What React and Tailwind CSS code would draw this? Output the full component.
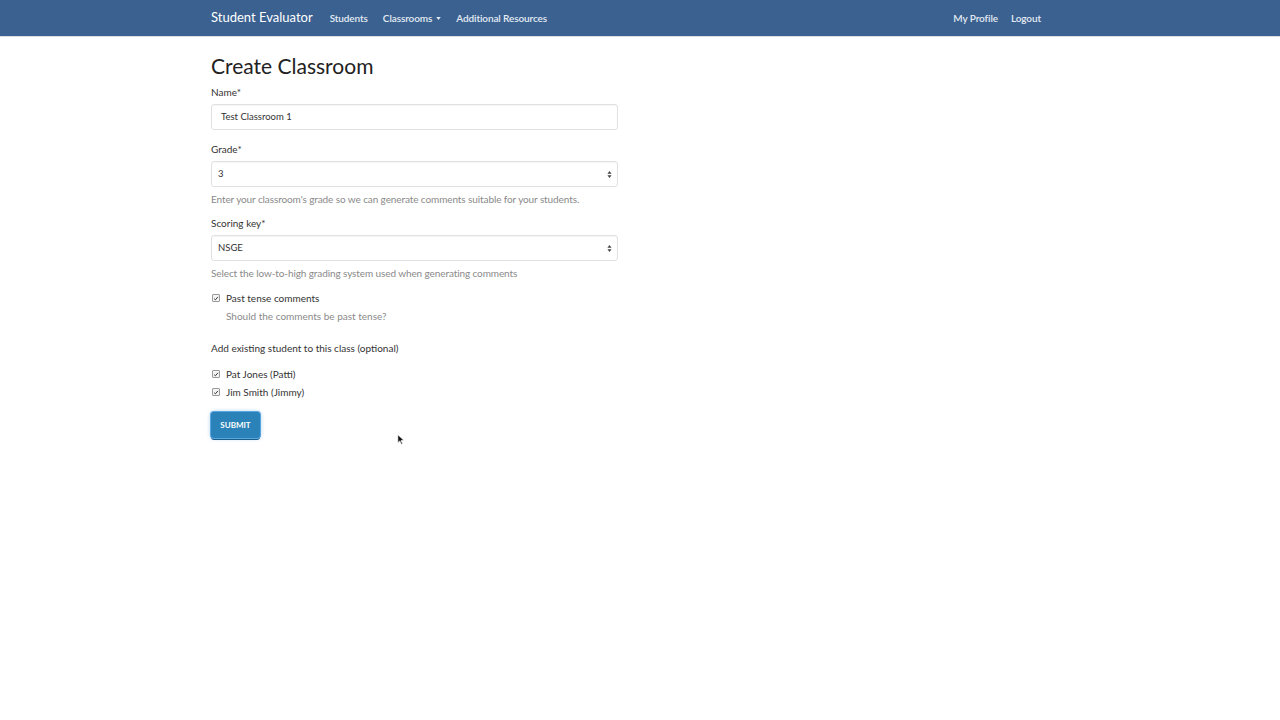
// Create Classroom form — bootstrap-ish flat theme, hand-rolled in Tailwind.

const font = { fontFamily: 'Lato, "Noto Sans", sans-serif' };

function Check() {
  return (
    <span className="inline-flex h-[8px] w-[8px] items-center justify-center rounded-[1px] border border-[#9a9a9a] bg-[#f4f4f4]">
      <svg viewBox="0 0 8 8" className="h-[7px] w-[7px]">
        <path d="M1.5 4.2 L3.2 5.8 L6.6 1.8" fill="none" stroke="#333" strokeWidth="1.3" />
      </svg>
    </span>
  );
}

function SelectArrows() {
  return (
    <svg viewBox="0 0 6 10" className="h-[9px] w-[5px]">
      <path d="M0.5 4 L3 0.8 L5.5 4 Z" fill="#444" />
      <path d="M0.5 6 L3 9.2 L5.5 6 Z" fill="#444" />
    </svg>
  );
}

function Field({ label, children, help }) {
  return (
    <div>
      <div className="h-[14px] text-[10px] leading-[14px] text-[#333]">{label}</div>
      {children}
      {help && (
        <p className="mt-[6px] h-[12px] text-[10px] leading-[12px] tracking-[-0.1px] text-[#8a8a8a]">{help}</p>
      )}
    </div>
  );
}

function Select({ value }) {
  return (
    <div className="mt-[5px] flex h-[26px] items-center justify-between rounded-[3px] border border-[#e1e1e1] bg-white pl-[6px] pr-[5px] text-[9.5px] text-[#333] shadow-[inset_0_1px_1px_rgba(0,0,0,0.04)]">
      <span>{value}</span>
      <SelectArrows />
    </div>
  );
}

function CheckRow({ children }) {
  return (
    <label className="flex h-[18px] items-center gap-[6px] pl-[1px] text-[10px] text-[#333]">
      <Check />
      <span>{children}</span>
    </label>
  );
}

export default function App() {
  return (
    <div className="relative min-h-screen bg-white" style={font}>
      <nav className="h-[37px] border-b border-[#d9dde2] bg-[#3a6190]">
        <div className="mx-auto flex h-full w-[858px] items-center">
          <span className="text-[13px] text-white">Student Evaluator</span>
          <div className="ml-[17px] flex items-center gap-[15px] text-[10px] font-semibold tracking-[-0.1px] text-[#e4ebf3]">
            <span>Students</span>
            <span className="flex items-center gap-[4px]">
              Classrooms
              <svg viewBox="0 0 6 4" className="h-[3px] w-[5px]">
                <path d="M0 0 L6 0 L3 4 Z" fill="#e4ebf3" />
              </svg>
            </span>
            <span>Additional Resources</span>
          </div>
          <div className="ml-auto mr-[28px] flex items-center gap-[13px] text-[10px] font-semibold tracking-[-0.1px] text-[#e4ebf3]">
            <span>My Profile</span>
            <span>Logout</span>
          </div>
        </div>
      </nav>

      <main className="mx-auto w-[858px]">
        <div className="w-[407px]">
          <h1 className="mt-[15px] h-[28px] text-[21px] leading-[28px] text-[#222]">Create Classroom</h1>

          <div className="mt-[5px]">
            <Field label="Name*">
              <div className="mt-[5px] flex h-[26px] items-center rounded-[3px] border border-[#e1e1e1] bg-white px-[9px] text-[9.5px] text-[#333] shadow-[inset_0_1px_1px_rgba(0,0,0,0.04)]">
                Test Classroom 1
              </div>
            </Field>
          </div>

          <div className="mt-[12px]">
            <Field
              label="Grade*"
              help="Enter your classroom's grade so we can generate comments suitable for your students."
            >
              <Select value="3" />
            </Field>
          </div>

          <div className="mt-[11px]">
            <Field label="Scoring key*" help="Select the low-to-high grading system used when generating comments">
              <Select value="NSGE" />
            </Field>
          </div>

          <div className="mt-[10px]">
            <CheckRow>Past tense comments</CheckRow>
            <p className="h-[18px] pl-[15px] text-[10px] leading-[18px] text-[#8a8a8a]">
              Should the comments be past tense?
            </p>
          </div>

          <p className="mt-[16px] h-[14px] text-[10px] leading-[14px] text-[#333]">
            Add existing student to this class (optional)
          </p>

          <div className="mt-[10px]">
            <CheckRow>Pat Jones (Patti)</CheckRow>
            <CheckRow>Jim Smith (Jimmy)</CheckRow>
          </div>

          <button className="mt-[11px] h-[26px] w-[49px] rounded-[3px] bg-[#2a82b8] text-[8px] font-bold text-white shadow-[0_0_0_1px_#5aa6e0,0_2px_0_#1b5e8a,0_0_4px_rgba(60,140,220,0.6)]">
            SUBMIT
          </button>
        </div>
      </main>

      <svg viewBox="0 0 10 14" className="absolute left-[397px] top-[434px] h-[11px] w-[8px]">
        <path d="M1 1 L1 11 L3.5 8.8 L5.5 13 L7 12.3 L5 8.2 L8.5 8 Z" fill="#111" stroke="#fff" strokeWidth="0.8" />
      </svg>
    </div>
  );
}
